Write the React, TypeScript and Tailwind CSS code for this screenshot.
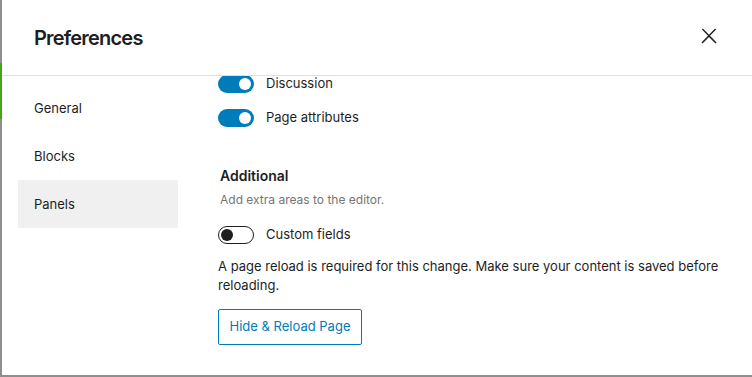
import React from "react";

function Toggle({ on }: { on: boolean }) {
  if (on) {
    return (
      <span className="relative inline-block h-[18px] w-[36px] shrink-0 rounded-full bg-[#007cba]">
        <span className="absolute right-[3px] top-[3px] h-[12px] w-[12px] rounded-full bg-white" />
      </span>
    );
  }
  return (
    <span className="relative inline-block h-[18px] w-[36px] shrink-0 rounded-full border border-[#1e1e1e] bg-white">
      <span className="absolute left-[2px] top-[2px] h-[12px] w-[12px] rounded-full bg-[#1e1e1e]" />
    </span>
  );
}

function ToggleRow({ label, on }: { label: string; on: boolean }) {
  return (
    <div className="flex h-[18px] items-center gap-3 text-[13px] text-[#1e1e1e]">
      <Toggle on={on} />
      <span>{label}</span>
    </div>
  );
}

const tabs = ["General", "Blocks", "Panels"];

export default function App() {
  return (
    <div
      className="flex h-[377px] w-[752px] flex-col bg-[#8e8e8e]"
      style={{ fontFamily: "Inter, 'Noto Sans', sans-serif" }}
    >
      <div className="flex h-[375px]">
        {/* overlay strip over the page behind */}
        <div className="flex w-[2px] flex-col">
          <div className="h-[63px]" />
          <div className="h-[56px] bg-[#47a317]" />
        </div>

        <div className="flex h-[375px] w-[750px] flex-col bg-white">
          {/* HEADER */}
          <div className="flex h-[76px] shrink-0 items-center justify-between border-b border-[#e0e0e0] pl-8 pr-[31px]">
            <h1 className="text-[20px] font-semibold tracking-[-0.8px] text-[#1e1e1e]">Preferences</h1>
            <svg width="24" height="24" viewBox="0 0 24 24" className="mt-[-3px]">
              <path
                fill="#1e1e1e"
                d="M13 11.8l6.1-6.3-1-1-6.1 6.2-6.1-6.2-1 1 6.1 6.3-6.5 6.7 1 1 6.5-6.6 6.5 6.6 1-1z"
              />
            </svg>
          </div>

          {/* BODY */}
          <div className="flex min-h-0 flex-1">
            <nav className="flex w-[176px] shrink-0 flex-col pl-4 pt-2">
              {tabs.map((t) => (
                <div
                  key={t}
                  className={
                    "flex h-[48px] w-[160px] items-center rounded-[2px] px-4 pt-[2px] text-[13px] text-[#1e1e1e] " +
                    (t === "Panels" ? "bg-[#f0f0f0]" : "")
                  }
                >
                  {t}
                </div>
              ))}
            </nav>

            <div className="min-w-0 flex-1 overflow-hidden pl-[40px] pr-[28px]">
              <div className="-mt-px flex flex-col gap-4">
                <ToggleRow label="Discussion" on />
                <ToggleRow label="Page attributes" on />
              </div>

              <h2 className="mt-[40px] pl-[2px] text-[14px] font-semibold leading-[18px] text-[#1e1e1e]">
                Additional
              </h2>
              <p className="mt-[7px] pl-[2px] text-[12px] leading-[16px] text-[#757575]">
                Add extra areas to the editor.
              </p>

              <div className="mt-[18px]">
                <ToggleRow label="Custom fields" on={false} />
              </div>

              <p className="mt-[13px] text-[13px] leading-[19px] text-[#1e1e1e]">
                A page reload is required for this change. Make sure your content is saved before
                reloading.
              </p>

              <button className="mt-[14px] h-[36px] w-[144px] rounded-[2px] border border-[#007cba] text-[13px] text-[#007cba]">
                Hide &amp; Reload Page
              </button>
            </div>
          </div>
        </div>
      </div>
    </div>
  );
}
